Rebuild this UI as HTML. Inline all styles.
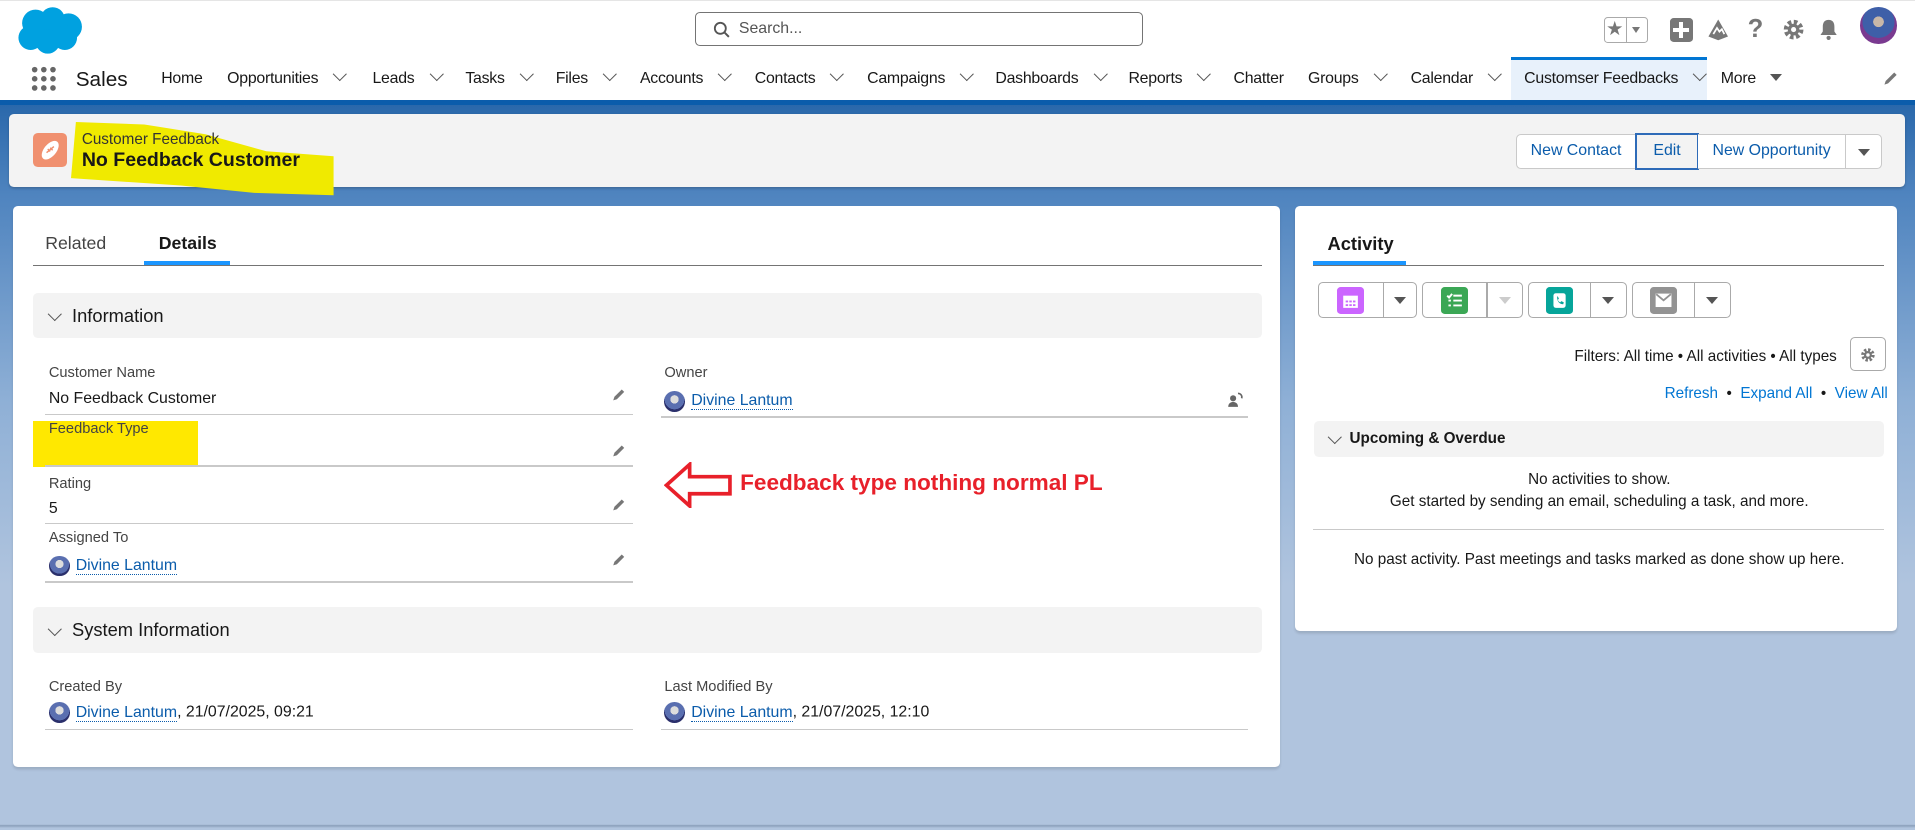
<!DOCTYPE html>
<html><head><meta charset="utf-8">
<style>
html,body{margin:0;padding:0;width:1915px;height:830px;overflow:hidden;background:#b0c4de;}
#w{zoom:1.22130;width:1568px;height:680px;position:relative;font-family:"Liberation Sans",sans-serif;color:#181818;font-size:13px;
background:linear-gradient(#2a68ab 86px,#4f84bf 160px,#8fb0d6 330px,#b0c4de 480px,#b0c4de 675px,#8a9fba 676px,#b0c4de 678px);}
.a{position:absolute;}
.hdr{left:0;top:0;width:1568px;height:82px;background:#fff;border-top:1px solid #e5e5e5;}
.bl{left:0;top:82px;width:1568px;height:4px;background:#0b5cab;}
.nav span{position:absolute;top:57px;font-size:13px;color:#181818;white-space:nowrap;letter-spacing:-0.2px}
.chev{display:inline-block;width:7px;height:7px;border-right:1.5px solid #555;border-bottom:1.5px solid #555;transform:rotate(45deg);margin-left:14px;position:relative;top:-3px}
.sch{position:absolute;width:7px;height:7px;border-right:1.5px solid #555;border-bottom:1.5px solid #555;transform:rotate(45deg)}
.card{background:#fff;border-radius:4px;box-shadow:0 2px 2px rgba(0,0,0,.12);}
.lbl{font-size:12px;color:#444;}
.val{font-size:13px;color:#181818;}
.ln{height:1px;background:#c9c9c9;}
.lk{color:#0b5cab;border-bottom:1px dotted #0b5cab;}
.av{display:inline-block;width:17px;height:17px;border-radius:50%;background:radial-gradient(circle at 50% 40%,#ddd 0 25%,#5a6fb0 26% 60%,#2a2f6b 61%);vertical-align:middle;margin-right:5px}
.pen{width:12px;height:12px}
.sec{background:#f3f3f3;border-radius:4px}
.btn{border:1px solid #c9c9c9;background:#fff;height:28px;box-sizing:border-box;color:#0b5cab;font-size:13px;line-height:26px;text-align:center}
.tri{width:0;height:0;border-left:5px solid transparent;border-right:5px solid transparent;border-top:6px solid #555}
</style></head><body><div id="w">
<div class="a hdr"></div>
<svg class="a" style="left:13px;top:5px" width="55" height="40" viewBox="0 0 55 40"><g fill="#00a1e0"><circle cx="16" cy="14" r="11"/><circle cx="30" cy="11" r="10"/><circle cx="43" cy="17" r="11"/><circle cx="12" cy="26" r="10"/><circle cx="26" cy="29" r="10"/><circle cx="40" cy="26" r="10"/></g></svg>
<div class="a" style="left:569px;top:10px;width:367px;height:28px;border:1px solid #747474;border-radius:4px;box-sizing:border-box"></div>
<svg class="a" style="left:584px;top:17px" width="14" height="14" viewBox="0 0 14 14"><circle cx="6" cy="6" r="4.5" fill="none" stroke="#555" stroke-width="1.5"/><path d="M9.5 9.5L13 13" stroke="#555" stroke-width="1.6"/></svg>
<div class="a" style="left:605px;top:16px;font-size:13px;color:#555">Search...</div>
<div class="a" style="left:1313px;top:14px;width:36px;height:21px;border:1px solid #aaa;border-radius:3px;box-sizing:border-box"></div>
<div class="a" style="left:1331px;top:14px;width:1px;height:21px;background:#aaa"></div>
<div class="a" style="left:1315px;top:14px;font-size:16px;color:#777">★</div>
<div class="a tri" style="left:1336px;top:22px;border-top-color:#777;border-left-width:4px;border-right-width:4px;border-top-width:5px"></div>
<div class="a" style="left:1367px;top:15px;width:19px;height:19px;background:#777;border-radius:3px"></div>
<div class="a" style="left:1375px;top:18px;width:3px;height:13px;background:#fff"></div>
<div class="a" style="left:1370px;top:23px;width:13px;height:3px;background:#fff"></div>
<svg class="a" style="left:1397px;top:14px" width="20" height="20" viewBox="0 0 20 20"><path d="M10 2L18 16L10 19L2 16Z" fill="#777"/><path d="M6 14l3-5 2 3 2-2 2 4" stroke="#fff" stroke-width="1.4" fill="none"/></svg>
<div class="a" style="left:1431px;top:12px;font-size:21px;color:#777;font-weight:bold">?</div>
<svg class="a" style="left:1459px;top:15px" width="19" height="19" viewBox="0 0 20 20"><circle cx="10" cy="10" r="6.5" fill="none" stroke="#777" stroke-width="4" stroke-dasharray="3 2.1"/><circle cx="10" cy="10" r="5" fill="#777"/><circle cx="10" cy="10" r="2.2" fill="#fff"/></svg>
<svg class="a" style="left:1488px;top:14px" width="19" height="20" viewBox="0 0 20 20"><path d="M10 2c-4 0-5 3-5 6v4l-2 3h14l-2-3V8c0-3-1-6-5-6z" fill="#777"/><circle cx="10" cy="17.5" r="1.8" fill="#777"/></svg>
<div class="a" style="left:1523px;top:6px;width:30px;height:30px;border-radius:50%;background:radial-gradient(circle at 50% 40%,#c8b7a8 0 18%,#3e5fa8 19% 55%,#7a3a90 56% 80%,#222 81%)"></div>
<svg class="a" style="left:25px;top:54px" width="21" height="21" viewBox="0 0 21 21"><g fill="#666"><circle cx="3" cy="3" r="2.3"/><circle cx="10.5" cy="3" r="2.3"/><circle cx="18" cy="3" r="2.3"/><circle cx="3" cy="10.5" r="2.3"/><circle cx="10.5" cy="10.5" r="2.3"/><circle cx="18" cy="10.5" r="2.3"/><circle cx="3" cy="18" r="2.3"/><circle cx="10.5" cy="18" r="2.3"/><circle cx="18" cy="18" r="2.3"/></g></svg>
<div class="a" style="left:62px;top:56px;font-size:17px">Sales</div>
<div class="a" style="left:1237px;top:47px;width:161px;height:35px;background:#e8f1fb;border-top:3px solid #0176d3;box-sizing:border-box"></div>
<div class="nav">
<span style="left:132px">Home</span>
<span style="left:186px">Opportunities<i class="chev"></i></span>
<span style="left:305px">Leads<i class="chev"></i></span>
<span style="left:381px">Tasks<i class="chev"></i></span>
<span style="left:455px">Files<i class="chev"></i></span>
<span style="left:524px">Accounts<i class="chev"></i></span>
<span style="left:618px">Contacts<i class="chev"></i></span>
<span style="left:710px">Campaigns<i class="chev"></i></span>
<span style="left:815px">Dashboards<i class="chev"></i></span>
<span style="left:924px">Reports<i class="chev"></i></span>
<span style="left:1010px">Chatter</span>
<span style="left:1071px">Groups<i class="chev"></i></span>
<span style="left:1155px">Calendar<i class="chev"></i></span>
<span style="left:1248px">Customser Feedbacks<i class="chev"></i></span>
<span style="left:1409px">More</span>
</div>
<div class="a tri" style="left:1449px;top:61px"></div>
<svg class="a" style="left:1541px;top:57px" width="14" height="14" viewBox="0 0 14 14"><path d="M2 12l1-3 7-7 2 2-7 7z" fill="#777"/></svg>
<div class="a bl"></div>
<div class="a" style="left:7px;top:93px;width:1553px;height:60px;background:#f3f3f3;border-radius:4px;box-shadow:0 1px 2px rgba(0,0,0,.2)"></div>
<svg class="a" style="left:58px;top:100px" width="216" height="62" viewBox="0 0 216 62"><path d="M4 0L60 2L110 10L160 24L215 28L215 60L150 58L90 52L30 48L0 46Z" fill="#f0ea00"/></svg>
<div class="a" style="left:27px;top:109px;width:28px;height:28px;background:#f0906f;border-radius:4px"></div>
<svg class="a" style="left:31px;top:113px" width="20" height="20" viewBox="0 0 20 20"><ellipse cx="10" cy="10" rx="9" ry="5" transform="rotate(-50 10 10)" fill="#fff"/><path d="M7 12l6-5M8 9l2 2M10 8l2 2" stroke="#f0906f" stroke-width="1.2"/></svg>
<div class="a" style="left:67px;top:107px;font-size:12.5px;color:#333">Customer Feedback</div>
<div class="a" style="left:67px;top:122px;font-size:16px;font-weight:bold">No Feedback Customer</div>
<div class="a btn" style="left:1241px;top:110px;width:99px;border-radius:4px 0 0 4px">New Contact</div>
<div class="a btn" style="left:1339px;top:109px;width:52px;height:30px;border:2px solid #2e6bb8;background:#f3f3f3;color:#0b5cab;line-height:26px">Edit</div>
<div class="a btn" style="left:1390px;top:110px;width:122px;border-left:none">New Opportunity</div>
<div class="a btn" style="left:1511px;top:110px;width:30px;border-radius:0 4px 4px 0"></div>
<div class="a tri" style="left:1521px;top:122px"></div>
<div class="a card" style="left:11px;top:169px;width:1037px;height:459px"></div>
<div class="a" style="left:37px;top:191px;font-size:14.5px;color:#444">Related</div>
<div class="a" style="left:130px;top:191px;font-size:14.5px;font-weight:bold">Details</div>
<div class="a" style="left:27px;top:217px;width:1006px;height:1px;background:#747474"></div>
<div class="a" style="left:118px;top:214px;width:70px;height:3px;background:#1b96ff"></div>
<div class="a sec" style="left:27px;top:240px;width:1006px;height:37px"></div>
<i class="sch" style="left:41px;top:253px"></i>
<div class="a" style="left:59px;top:250px;font-size:15px">Information</div>
<div class="a lbl" style="left:40px;top:299px">Customer Name</div>
<div class="a val" style="left:40px;top:319px">No Feedback Customer</div>
<div class="a ln" style="left:37px;top:339px;width:481px"></div>
<div class="a" style="left:27px;top:345px;width:135px;height:37px;background:#ffe800"></div>
<div class="a lbl" style="left:40px;top:345px">Feedback Type</div>
<div class="a ln" style="left:37px;top:381px;width:481px"></div>
<div class="a lbl" style="left:40px;top:390px">Rating</div>
<div class="a val" style="left:40px;top:409px">5</div>
<div class="a ln" style="left:37px;top:428px;width:481px"></div>
<div class="a lbl" style="left:40px;top:434px">Assigned To</div>
<div class="a val" style="left:40px;top:455px"><i class="av"></i><span class="lk">Divine Lantum</span></div>
<div class="a ln" style="left:37px;top:476px;width:481px"></div>
<svg class="a pen" style="left:501px;top:317px" viewBox="0 0 12 12"><path d="M1 11l1-3 6-6 2 2-6 6z" fill="#777"/></svg>
<svg class="a pen" style="left:501px;top:363px" viewBox="0 0 12 12"><path d="M1 11l1-3 6-6 2 2-6 6z" fill="#777"/></svg>
<svg class="a pen" style="left:501px;top:407px" viewBox="0 0 12 12"><path d="M1 11l1-3 6-6 2 2-6 6z" fill="#777"/></svg>
<svg class="a pen" style="left:501px;top:452px" viewBox="0 0 12 12"><path d="M1 11l1-3 6-6 2 2-6 6z" fill="#777"/></svg>
<div class="a lbl" style="left:544px;top:299px">Owner</div>
<div class="a val" style="left:544px;top:320px"><i class="av"></i><span class="lk">Divine Lantum</span></div>
<div class="a ln" style="left:541px;top:341px;width:481px"></div>
<svg class="a" style="left:1005px;top:320px" width="14" height="14" viewBox="0 0 14 14"><circle cx="5" cy="6" r="2.5" fill="#666"/><path d="M1 13c0-3 2-4 4-4s4 1 4 4z" fill="#666"/><path d="M9 2a3 3 0 0 1 3 4" stroke="#666" fill="none" stroke-width="1.3"/></svg>
<svg class="a" style="left:544px;top:378px" width="56" height="38" viewBox="0 0 56 38"><path d="M2 19L21 2V12H54V26H21V36Z" fill="#fff" stroke="#e8202a" stroke-width="3"/></svg>
<div class="a" style="left:606px;top:385px;font-size:18.5px;font-weight:bold;color:#e8202a">Feedback type nothing normal PL</div>
<div class="a sec" style="left:27px;top:497px;width:1006px;height:38px"></div>
<i class="sch" style="left:41px;top:511px"></i>
<div class="a" style="left:59px;top:507px;font-size:15px">System Information</div>
<div class="a lbl" style="left:40px;top:556px">Created By</div>
<div class="a val" style="left:40px;top:575px"><i class="av"></i><span class="lk">Divine Lantum</span>, 21/07/2025, 09:21</div>
<div class="a ln" style="left:37px;top:597px;width:481px"></div>
<div class="a lbl" style="left:544px;top:556px">Last Modified By</div>
<div class="a val" style="left:544px;top:575px"><i class="av"></i><span class="lk">Divine Lantum</span>, 21/07/2025, 12:10</div>
<div class="a ln" style="left:541px;top:597px;width:481px"></div>
<div class="a card" style="left:1060px;top:169px;width:493px;height:348px"></div>
<div class="a" style="left:1087px;top:191px;font-size:15px;font-weight:bold">Activity</div>
<div class="a" style="left:1075px;top:217px;width:468px;height:1px;background:#747474"></div>
<div class="a" style="left:1075px;top:214px;width:76px;height:3px;background:#1b96ff"></div>
<div class="a" style="left:1079px;top:231px;width:81px;height:29px;border:1px solid #aaa;border-radius:4px;box-sizing:border-box"></div>
<div class="a" style="left:1164px;top:231px;width:83px;height:29px;border:1px solid #aaa;border-radius:4px;box-sizing:border-box"></div>
<div class="a" style="left:1251px;top:231px;width:81px;height:29px;border:1px solid #aaa;border-radius:4px;box-sizing:border-box"></div>
<div class="a" style="left:1336px;top:231px;width:81px;height:29px;border:1px solid #aaa;border-radius:4px;box-sizing:border-box"></div>
<div class="a" style="left:1132px;top:231px;width:1px;height:29px;background:#aaa"></div>
<div class="a" style="left:1217px;top:231px;width:1px;height:29px;background:#aaa"></div>
<div class="a" style="left:1302px;top:231px;width:1px;height:29px;background:#aaa"></div>
<div class="a" style="left:1387px;top:231px;width:1px;height:29px;background:#aaa"></div>
<div class="a" style="left:1095px;top:235px;width:22px;height:22px;border-radius:3px;background:#cb65ff"></div>
<div class="a" style="left:1180px;top:235px;width:22px;height:22px;border-radius:3px;background:#3ba755"></div>
<div class="a" style="left:1266px;top:235px;width:22px;height:22px;border-radius:3px;background:#06a59a"></div>
<div class="a" style="left:1351px;top:235px;width:22px;height:22px;border-radius:3px;background:#939393"></div>
<svg class="a" style="left:1099px;top:239px" width="14" height="14" viewBox="0 0 14 14"><rect x="1" y="3" width="12" height="10" fill="#fff"/><g fill="#cb65ff"><rect x="3" y="7" width="2" height="1.5"/><rect x="6" y="7" width="2" height="1.5"/><rect x="9" y="7" width="2" height="1.5"/><rect x="3" y="10" width="2" height="1.5"/><rect x="6" y="10" width="2" height="1.5"/><rect x="9" y="10" width="2" height="1.5"/></g></svg>
<svg class="a" style="left:1184px;top:239px" width="14" height="14" viewBox="0 0 14 14"><path d="M1 3l1.5 1.5L5 1.5M6 3h7M2 7h2M6 7h7M2 11h2M6 11h7" stroke="#fff" stroke-width="1.6" fill="none"/></svg>
<svg class="a" style="left:1270px;top:239px" width="14" height="14" viewBox="0 0 14 14"><rect x="2" y="1" width="10" height="12" rx="2" fill="#fff"/><path d="M5 4c0 4 2 6 5 6l.5-1.5-2-1-1 1c-1-.5-1.5-1-2-2l1-1-1-2z" fill="#06a59a"/></svg>
<svg class="a" style="left:1355px;top:240px" width="14" height="12" viewBox="0 0 14 12"><rect x="0.5" y="0.5" width="13" height="11" fill="#fff"/><path d="M1 1l6 5 6-5" stroke="#939393" stroke-width="1.5" fill="none"/></svg>
<div class="a tri" style="left:1141px;top:243px"></div>
<div class="a tri" style="left:1227px;top:243px;border-top-color:#ccc"></div>
<div class="a tri" style="left:1312px;top:243px"></div>
<div class="a tri" style="left:1397px;top:243px"></div>
<div class="a" style="left:1200px;top:285px;width:304px;text-align:right;font-size:12.5px">Filters: All time • All activities • All types</div>
<div class="a" style="left:1515px;top:276px;width:29px;height:28px;border:1px solid #aaa;border-radius:4px;box-sizing:border-box"></div>
<svg class="a" style="left:1523px;top:284px" width="13" height="13" viewBox="0 0 20 20"><circle cx="10" cy="10" r="6.5" fill="none" stroke="#777" stroke-width="4" stroke-dasharray="3 2.1"/><circle cx="10" cy="10" r="5" fill="#777"/><circle cx="10" cy="10" r="2.2" fill="#fff"/></svg>
<div class="a" style="left:1363px;top:315px;font-size:12.5px;color:#0176d3;white-space:pre">Refresh  <span style="color:#181818">•</span>  Expand All  <span style="color:#181818">•</span>  View All</div>
<div class="a sec" style="left:1076px;top:345px;width:467px;height:29px"></div>
<i class="sch" style="left:1089px;top:354px"></i>
<div class="a" style="left:1105px;top:352px;font-size:12.5px;font-weight:bold">Upcoming &amp; Overdue</div>
<div class="a" style="left:1076px;top:384px;width:467px;text-align:center;font-size:12.5px;line-height:18px">No activities to show.<br>Get started by sending an email, scheduling a task, and more.</div>
<div class="a" style="left:1075px;top:433px;width:468px;height:1px;background:#c9c9c9"></div>
<div class="a" style="left:1076px;top:451px;width:467px;text-align:center;font-size:12.5px">No past activity. Past meetings and tasks marked as done show up here.</div>
</div></body></html>
